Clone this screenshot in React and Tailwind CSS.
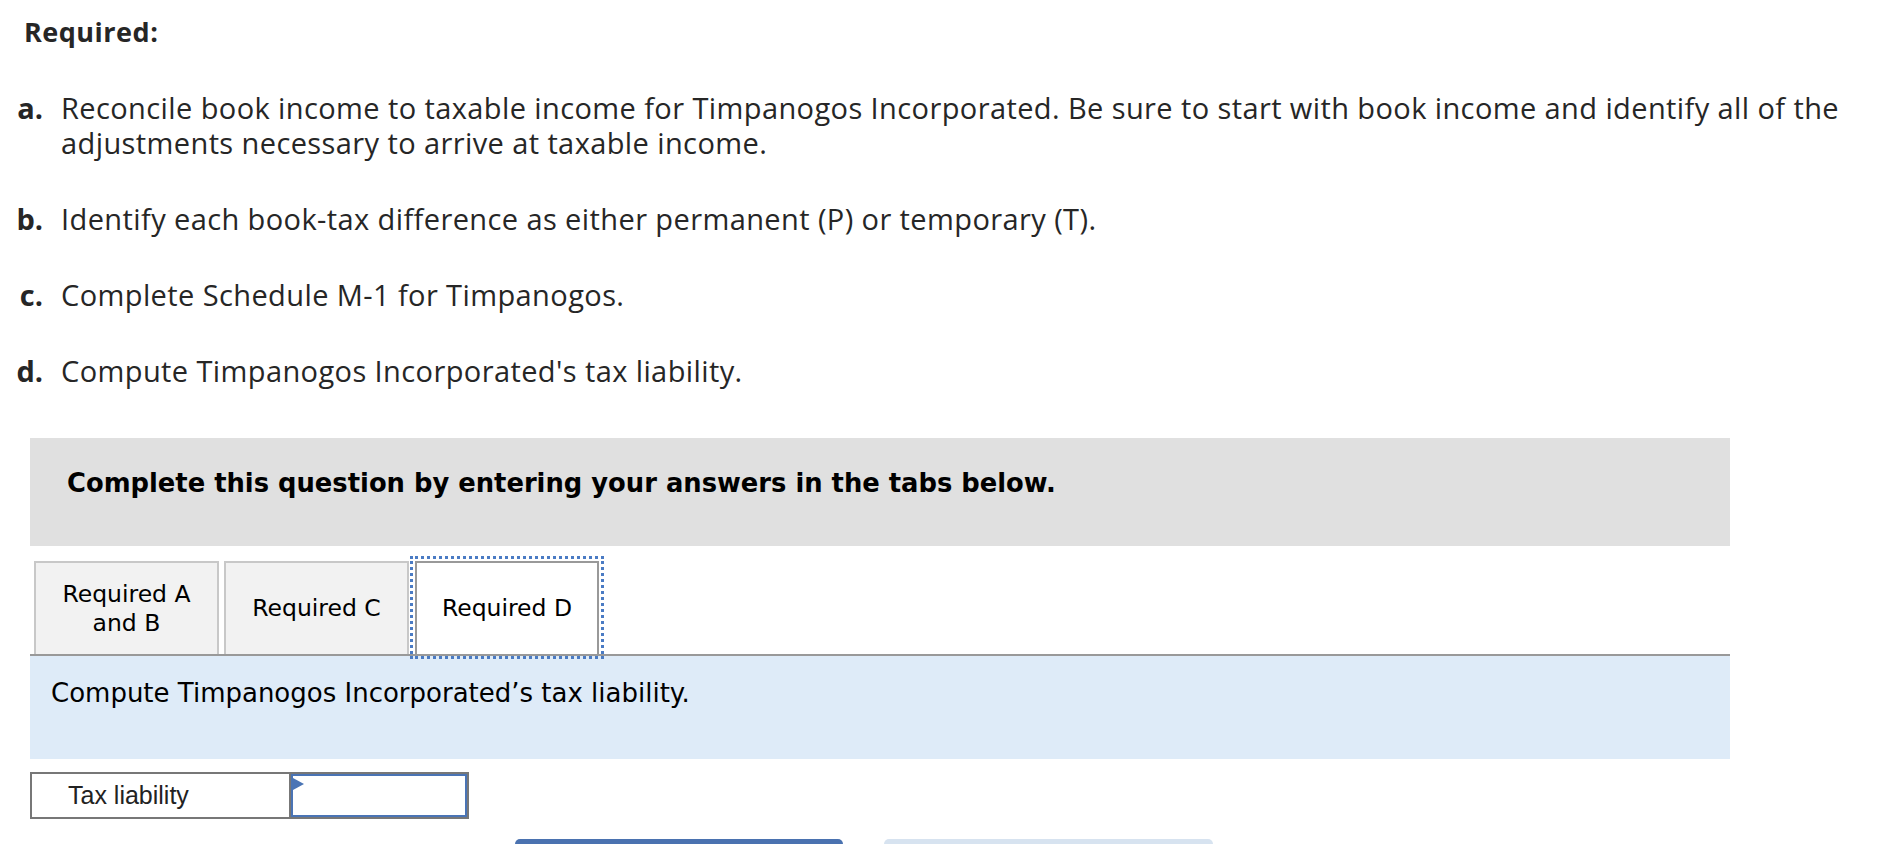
import React from "react";

function Item({ label, children }) {
  return (
    <div className="flex">
      <div className="w-[43px] shrink-0 text-right font-bold tracking-normal">{label}</div>
      <div className="pl-[18px]">{children}</div>
    </div>
  );
}

function Tab({ children, active }) {
  if (active) {
    return (
      <div className="w-[184px] h-[93px] bg-white border-2 border-b-0 border-[#999999] outline-[3px] outline-dotted outline-[#4a7bc4] outline-offset-[2px] flex items-center justify-center text-center text-black ml-[1px]">
        {children}
      </div>
    );
  }
  return (
    <div className="w-[185px] h-[93px] bg-[#f2f2f2] border-2 border-b-0 border-[#c8c8c8] flex items-center justify-center text-center text-black">
      {children}
    </div>
  );
}

export default function App() {
  return (
    <div className="w-full h-[844px] overflow-hidden bg-white">
      <div className="font-['Open_Sans',sans-serif] text-[#262626]">
        <div className="pt-[16px] pl-[24px] text-[27px] leading-[32px] font-bold tracking-[0.5px]">Required:</div>
        <div className="mt-[42px] flex flex-col gap-[41px] text-[29px] leading-[35px] tracking-[0.4px]">
          <Item label="a.">
            Reconcile book income to taxable income for Timpanogos Incorporated. Be sure to start with book income and identify all of the
            <br />
            adjustments necessary to arrive at taxable income.
          </Item>
          <Item label="b.">Identify each book-tax difference as either permanent (P) or temporary (T).</Item>
          <Item label="c.">Complete Schedule M-1 for Timpanogos.</Item>
          <Item label="d.">Compute Timpanogos Incorporated's tax liability.</Item>
        </div>
      </div>

      <div className="ml-[30px] w-[1700px] mt-[50px] font-['DejaVu_Sans',Verdana,sans-serif]">
        <div className="h-[108px] bg-[#e0e0e0] pt-[30px] pl-[37px] text-[25.8px] leading-[30px] font-bold text-black">
          Complete this question by entering your answers in the tabs below.
        </div>

        <div className="mt-[15px] flex items-end gap-[5px] pl-[4px] border-b-2 border-[#999999] text-[23.5px] leading-[29px]">
          <Tab>
            Required A
            <br />
            and B
          </Tab>
          <Tab>Required C</Tab>
          <Tab active>Required D</Tab>
        </div>

        <div className="h-[103px] bg-[#deebf8] pt-[22px] pl-[21px] text-[26px] leading-[30px] text-black">
          Compute Timpanogos Incorporated’s tax liability.
        </div>

        <div className="mt-[13px] w-[439px] h-[47px] flex border-2 border-[#777777] font-['Liberation_Sans',Arial,sans-serif]">
          <div className="w-[259px] shrink-0 border-r-2 border-[#777777] flex items-center pl-[36px] text-[25px] text-[#222222]">
            Tax liability
          </div>
          <div className="relative flex-1 border-2 border-[#4a74b5] bg-white">
            <svg className="absolute left-0 top-[2px]" width="11" height="12" viewBox="0 0 11 12">
              <polygon points="0,0 11,6 0,12" fill="#4a74b5" />
            </svg>
          </div>
        </div>
      </div>

      <div className="mt-[20px] flex gap-[41px] pl-[515px]">
        <div className="w-[328px] h-[40px] rounded-[5px] bg-[#4a72b0]"></div>
        <div className="w-[329px] h-[40px] rounded-[5px] bg-[#d7e3f0]"></div>
      </div>
    </div>
  );
}
